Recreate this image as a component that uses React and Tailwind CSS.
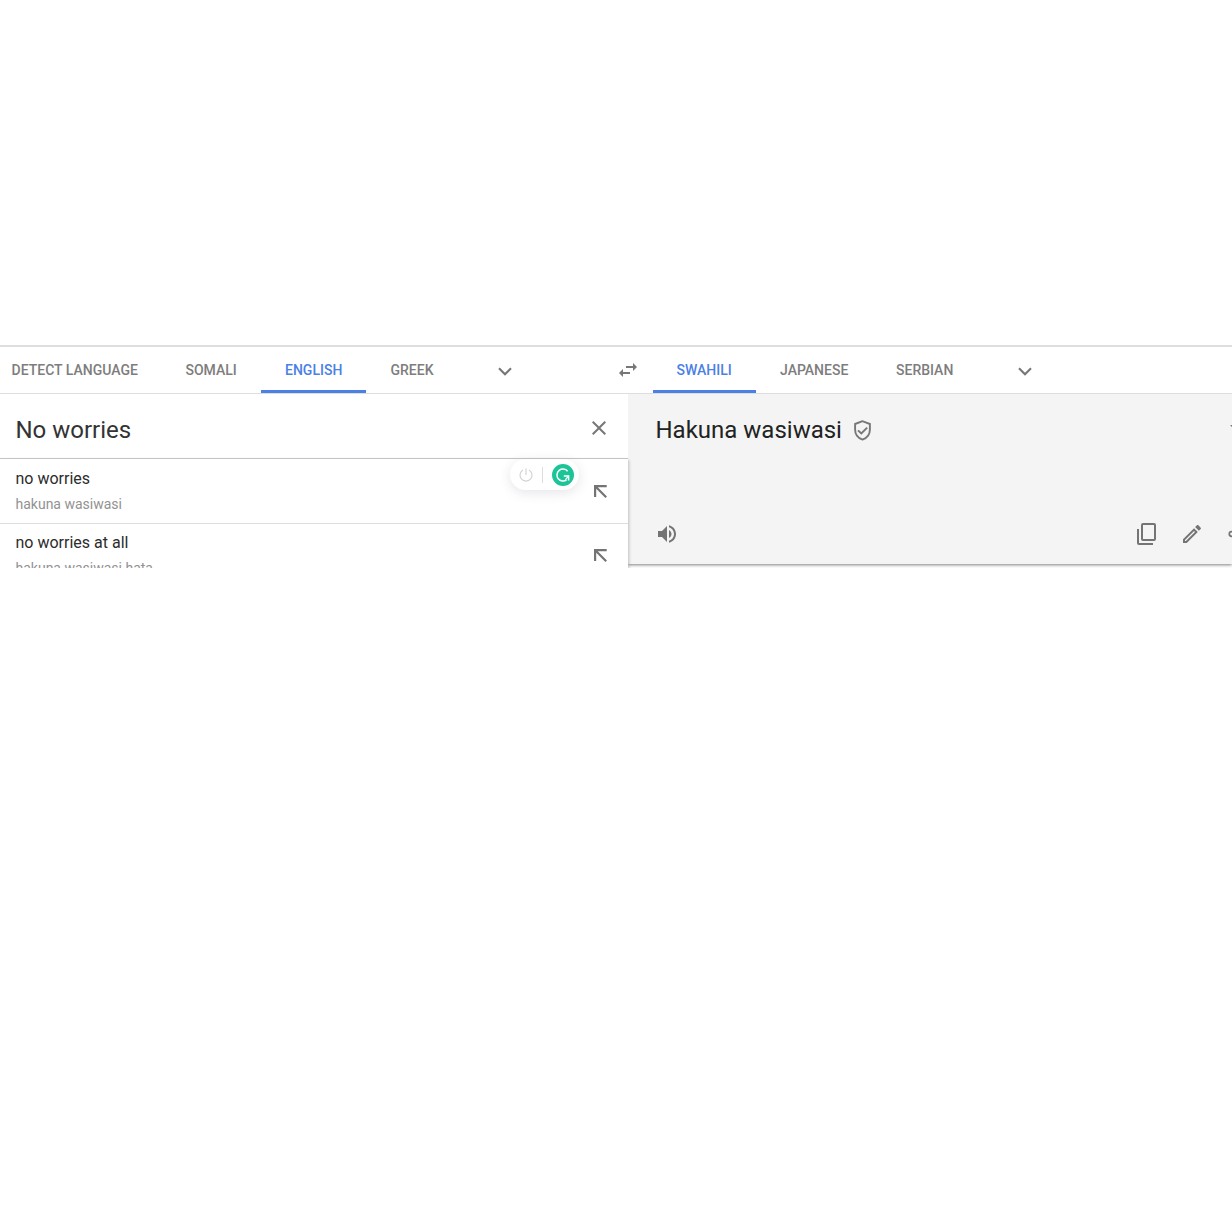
import clsx from "clsx";

const sourceTabs = [
  { label: "Detect language", className: "w-[162px] pl-[11.5px]" },
  { label: "Somali", className: "w-[99px] pl-[23.5px]" },
  { label: "English", className: "w-[105px] pl-6", active: true },
  { label: "Greek", className: "w-[92px] pl-[24.5px]" },
];

const targetTabs = [
  { label: "Swahili", className: "w-[103px] pl-[23.5px]", active: true },
  { label: "Japanese", className: "w-[116px] pl-6" },
  { label: "Serbian", className: "w-[105px] pl-6" },
];

const suggestions = [
  { text: "no worries", translation: "hakuna wasiwasi" },
  { text: "no worries at all", translation: "hakuna wasiwasi hata" },
];

function Icon({ d, className }) {
  return (
    <svg viewBox="0 0 24 24" fill="currentColor" className={clsx("shrink-0", className)}>
      <path d={d} />
    </svg>
  );
}

function Chevron() {
  return (
    <svg width="14" height="9" viewBox="0 0 14 9" fill="none" stroke="currentColor" strokeWidth="2.1">
      <path d="M1 1.2L7 7.2L13 1.2" />
    </svg>
  );
}

function Tab({ label, className, active }) {
  return (
    <button
      className={clsx(
        "h-full border-b-[3px] pt-[3px] text-left text-sm font-medium whitespace-nowrap uppercase",
        active ? "border-[#4b80e6] text-[#4b80e6]" : "border-transparent text-[#7d7d7d]",
        className,
      )}
    >
      {label}
    </button>
  );
}

function GrammarlyBadge() {
  return (
    <div className="absolute top-0 left-[510px] flex h-[31px] w-[69px] items-center rounded-full bg-white pl-[9px] shadow-[0_3px_12px_rgba(60,60,100,0.13)]">
      <svg width="14" height="14" viewBox="0 0 14 14" fill="none" stroke="#d0d0d0" strokeWidth="1.1">
        <path d="M4 1.9A6 6 0 1 0 10 1.9M7 0.5V7" />
      </svg>
      <span className="ml-[9px] h-4 w-px bg-[#dddddd]" />
      <svg className="ml-[9px]" width="22" height="22" viewBox="0 0 22 22" fill="none">
        <circle cx="11" cy="11" r="11" fill="#1dc498" />
        <path d="M15.6 7.2A6 6 0 1 0 14.6 15.8" stroke="white" strokeWidth="1.5" />
        <path d="M11.8 12H16.6V16.6" stroke="white" strokeWidth="1.5" />
        <path d="M16.6 12L13.4 15.6" stroke="white" strokeWidth="1.2" />
      </svg>
    </div>
  );
}

function Suggestion({ text, translation }) {
  return (
    <li className="flex h-16 shrink-0 justify-between border-b border-[#dedede] pr-[21px] pl-[15.5px]">
      <div>
        <p className="pt-[7px] text-base leading-6 text-[#2c2c2c]">{text}</p>
        <p className="pt-[3px] text-sm leading-5 text-[#929292]">{translation}</p>
      </div>
      <svg
        className="mt-[25px]"
        width="13"
        height="13"
        viewBox="0 0 13 13"
        fill="none"
        stroke="#747474"
        strokeWidth="2.2"
      >
        <path d="M1.1 12V1.1H12.7M1 1L12.2 12.2" />
      </svg>
    </li>
  );
}

export default function App() {
  return (
    <div className="h-[1232px] overflow-hidden bg-white pt-[345px] font-[Roboto,sans-serif]">
      <div className="flex h-[223px] flex-col overflow-hidden">
        <header className="relative z-20 flex h-[49px] shrink-0 border-t-2 border-b border-[#dedede] bg-white text-[#777777]">
          <nav className="flex h-[46px] w-[609px] shrink-0">
            {sourceTabs.map((tab) => (
              <Tab key={tab.label} {...tab} />
            ))}
            <button className="ml-10 pt-0.5">
              <Chevron />
            </button>
          </nav>
          <button className="w-[44px] shrink-0 pl-[7px]">
            <Icon
              className="size-6"
              d="M6.99 11L3 15l3.99 4v-3H14v-2H6.99v-3zM21 9l-3.99-4v3H10v2h7.01v3L21 9z"
            />
          </button>
          <nav className="flex h-[46px]">
            {targetTabs.map((tab) => (
              <Tab key={tab.label} {...tab} />
            ))}
            <button className="ml-[41px] pt-0.5">
              <Chevron />
            </button>
          </nav>
        </header>

        <main className="flex min-h-0 flex-1">
          <section className="z-10 flex w-[628px] shrink-0 flex-col bg-white">
            <div className="flex h-[64px] shrink-0 justify-between pr-[17px] pl-[15.5px]">
              <p className="pt-5 text-2xl leading-8 text-[#333333]">No worries</p>
              <Icon
                className="mt-[22px] size-6 text-[#777777]"
                d="M19 6.41L17.59 5 12 10.59 6.41 5 5 6.41 10.59 12 5 17.59 6.41 19 12 13.41 17.59 19 19 17.59 13.41 12z"
              />
            </div>
            <ul className="relative flex min-h-0 flex-1 flex-col border-t border-[#c4c4c4] pt-px shadow-[1px_2px_3px_rgba(0,0,0,0.22)]">
              {suggestions.map((item) => (
                <Suggestion key={item.text} {...item} />
              ))}
              <GrammarlyBadge />
            </ul>
          </section>

          <section className="flex h-[170px] w-[604px] flex-col justify-between bg-[#f4f4f4] shadow-[0_1px_3px_rgba(0,0,0,0.5)]">
            <div className="flex w-full justify-between overflow-hidden pl-[27.5px]">
              <div className="flex">
                <p className="pt-5 text-2xl leading-8 text-[#222222]">Hakuna wasiwasi</p>
                <svg
                  className="mt-[26px] ml-3"
                  width="17"
                  height="21"
                  viewBox="0 0 17 21"
                  fill="none"
                  stroke="#777777"
                  strokeWidth="1.9"
                >
                  <path d="M8.5 1.2L1.1 4V9.6C1.1 14.3 4.1 18.2 8.5 19.6C12.9 18.2 15.9 14.3 15.9 9.6V4Z" />
                  <path d="M4 10.4L7.3 13.5L13.2 7.6" />
                </svg>
              </div>
              <Icon
                className="mt-[22px] -mr-5 size-6 text-[#777777]"
                d="M22 9.24l-7.19-.62L12 2 9.19 8.63 2 9.24l5.46 4.73L5.82 21 12 17.27 18.18 21l-1.63-7.03L22 9.24zM12 15.4l-3.76 2.27 1-4.28-3.32-2.88 4.38-.38L12 6.1l1.71 4.04 4.38.38-3.32 2.88 1 4.28L12 15.4z"
              />
            </div>
            <div className="flex h-[60px] w-full items-center overflow-hidden pl-[27px] text-[#747474]">
              <Icon
                className="size-6"
                d="M3 9v6h4l5 5V4L7 9H3zm13.5 3c0-1.77-1.02-3.29-2.5-4.03v8.05c1.48-.73 2.5-2.25 2.5-4.02zM14 3.23v2.06c2.89.86 5 3.54 5 6.71s-2.11 5.85-5 6.71v2.06c4.01-.91 7-4.49 7-8.77s-2.99-7.86-7-8.77z"
              />
              <svg
                className="ml-[458px] shrink-0"
                width="19"
                height="22"
                viewBox="0 0 19 22"
                fill="none"
                stroke="currentColor"
                strokeWidth="2"
              >
                <rect x="5" y="1" width="13" height="16" rx="1" />
                <path d="M1 6V20Q1 21 2 21H16" />
              </svg>
              <Icon
                className="ml-6 size-6"
                d="M14.06 9.02l.92.92L5.92 19H5v-.92l9.06-9.06M17.66 3c-.25 0-.51.1-.7.29l-1.83 1.83 3.75 3.75 1.83-1.83c.39-.39.39-1.02 0-1.41l-2.34-2.34c-.2-.2-.45-.29-.71-.29zm-3.6 3.19L3 17.25V21h3.75L17.81 9.94l-3.75-3.75z"
              />
              <svg
                className="ml-6 size-6 shrink-0"
                viewBox="0 0 24 24"
                fill="none"
                stroke="currentColor"
                strokeWidth="1.7"
              >
                <circle cx="3.6" cy="12" r="2.3" />
                <circle cx="18" cy="5" r="2.3" />
                <circle cx="18" cy="19" r="2.3" />
                <path d="M5.7 11L16 6M5.7 13L16 18" />
              </svg>
            </div>
          </section>
        </main>
      </div>
    </div>
  );
}
